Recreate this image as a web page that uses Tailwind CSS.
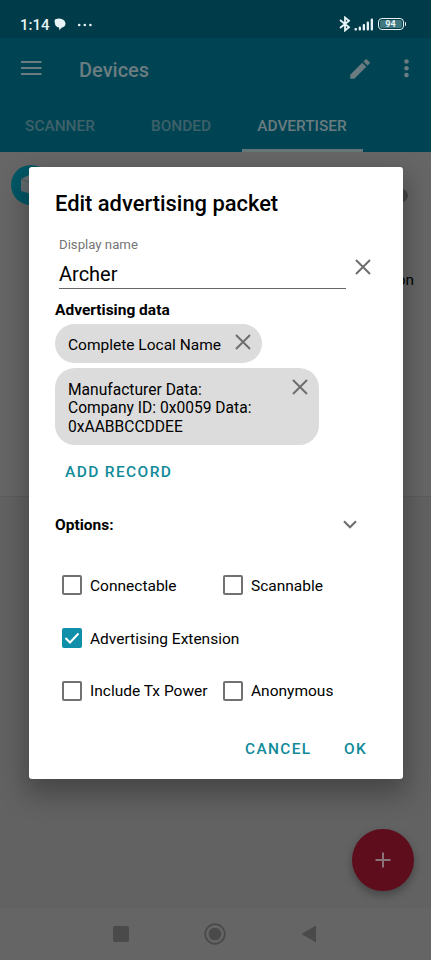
<!DOCTYPE html>
<html lang="en">
<head>
<meta charset="utf-8">
<meta name="viewport" content="width=device-width, initial-scale=1">
<title>Devices</title>
<script src="https://cdn.jsdelivr.net/npm/@tailwindcss/browser@4"></script>
</head>
<body class="relative h-[960px] w-[431px] overflow-hidden bg-[#656565] font-[Roboto,sans-serif] text-black">

<!-- Dimmed screen -->
<div class="flex h-[960px] flex-col">
  <header class="bg-[#004454]">
    <div class="flex h-[38px] items-end justify-between bg-[#003b49] pr-[25px] pl-[20px] text-[#e8f4f6]">
      <div class="flex h-[27px] items-center">
        <span class="pt-[2px] text-[15px] leading-none font-medium">1:14</span>
        <svg class="ml-[4px]" width="13" height="13" viewBox="0 0 13 13" fill="currentColor"><path d="M1 1.500Q6-.8 10 2.200Q12.600 5 10.800 8Q9 9.500 7.500 9.800L5.500 12.300L5 9.600Q1 8.500 1 5.500Q.2 3 1 1.500Z"/></svg>
        <svg class="ml-[10px]" width="16" height="4" viewBox="0 0 16 4" fill="currentColor"><circle cx="2.200" cy="2" r="1.300"/><circle cx="7.800" cy="2" r="1.300"/><circle cx="13.400" cy="2" r="1.300"/></svg>
      </div>
      <div class="flex h-[28px] items-center">
        <svg width="12" height="16" viewBox="0 0 12 16" fill="none" stroke="currentColor" stroke-width="1.800"><path d="M1 4L10 11.300L6 14.500V1.500L10 4.700L1 12"/></svg>
        <svg class="ml-[3px]" width="20" height="13" viewBox="0 0 20 13" fill="currentColor"><rect x="0.500" y="10" width="2.500" height="2.500" rx="1"/><rect x="4.700" y="8.500" width="2.300" height="4" rx="1"/><rect x="8.700" y="6" width="2.300" height="6.500" rx="1"/><rect x="12.700" y="3.500" width="2.300" height="9" rx="1"/><rect x="16.700" y="0.500" width="2.300" height="12" rx="1"/></svg>
        <div class="ml-[4px] flex h-[12px] w-[26px] items-center justify-center rounded-[4px] border border-current p-px"><span class="flex h-full w-full items-center justify-center rounded-[2px] bg-[#3f7880] pt-px text-[9px] leading-none font-bold">94</span></div>
        <div class="ml-px h-[4px] w-[1.500px] rounded-r bg-current"></div>
      </div>
    </div>
    <div class="flex h-[62px] items-center pr-[21px] pl-[21px] text-[#6b7c80]">
      <svg class="-mt-[2px]" width="21" height="14" viewBox="0 0 21 14" fill="currentColor"><path d="M0 0h20.500v2H0zM0 6h20.500v2H0zM0 12h20.500v2H0z"/></svg>
      <h1 class="ml-[37px] flex-1 pt-[2px] text-[20px] leading-none font-medium">Devices</h1>
      <svg class="-mt-px" width="26" height="26" viewBox="0 0 24 24" fill="currentColor"><path d="M3 17.250V21h3.750L17.810 9.940l-3.750-3.750L3 17.250zM20.710 7.040a1 1 0 0 0 0-1.410l-2.340-2.340a1 1 0 0 0-1.410 0l-1.830 1.830 3.750 3.750 1.830-1.830z"/></svg>
      <svg class="-mt-px ml-[30px]" width="7" height="19" viewBox="0 0 7 19" fill="currentColor"><circle cx="3.500" cy="2.500" r="2.300"/><circle cx="3.500" cy="9.300" r="2.300"/><circle cx="3.500" cy="16.100" r="2.300"/></svg>
    </div>
    <nav class="grid h-[52px] grid-cols-[121px_121px_121px] text-center text-[15.400px] font-medium text-[#3e6169]">
      <span class="h-[52px] pr-px leading-[53px]">SCANNER</span>
      <span class="h-[52px] pr-px leading-[53px]">BONDED</span>
      <span class="h-[52px] border-b-[3px] border-[#657779] pr-px leading-[53px] text-[#6b7c80]">ADVERTISER</span>
    </nav>
  </header>
  <main class="relative h-[345px] border-b border-[#5c5c5c] bg-[#666]">
    <div class="absolute top-[13px] left-[11px] flex size-[40px] items-center rounded-full bg-[#005766] pl-[9px]">
      <svg width="22" height="20" viewBox="0 0 22 20"><path d="M1 4L9 0L19 4V15L11 19L1 16Z" fill="#656d70"/><path d="M1 4L11 8L19 4M11 8V19" stroke="#4b595d" fill="none"/></svg>
    </div>
    <div class="absolute top-[37px] left-[395px] size-[13px] rounded-full bg-[#444]"></div>
    <div class="absolute top-[118px] right-[17px] text-[15.400px] leading-[20px]">Advertising Extension</div>
  </main>
  <div class="flex-1 bg-[#626262]"></div>
  <footer class="flex h-[52px] items-center bg-[#656565] pl-[113px] text-[#4a4a4a]">
    <div class="size-[16px] rounded-[2px] bg-current"></div>
    <svg class="ml-[75px]" width="22" height="22" viewBox="0 0 22 22"><circle cx="11" cy="11" r="9.800" fill="none" stroke="currentColor" stroke-width="1.700"/><circle cx="11" cy="11" r="6.300" fill="currentColor"/></svg>
    <svg class="ml-[75px]" width="16" height="18" viewBox="0 0 16 18" fill="currentColor"><path d="M.5 9L15 .5V17.500Z"/></svg>
  </footer>
</div>
<div class="absolute top-[829px] left-[352px] flex size-[62px] items-center justify-center rounded-full bg-[#5e0d1c] shadow-[0_4px_8px_rgba(0,0,0,0.3)]">
  <svg width="16" height="16" viewBox="0 0 16 16" stroke="#8a7378" stroke-width="2"><path d="M8 .5V15.500M.5 8H15.500"/></svg>
</div>

<!-- Dialog -->
<section class="absolute top-[166.500px] left-[28.500px] flex h-[612.500px] w-[374.500px] flex-col rounded-[3px] bg-white pl-[26.500px] shadow-[0_12px_26px_4px_rgba(0,0,0,0.28)]">
  <h2 class="h-[67px] text-[21.900px] leading-[73px] font-medium">Edit advertising packet</h2>
  <div class="flex h-[55px] pl-[4px]">
    <div class="w-[287px] border-b border-[#666]">
      <div class="h-[22px] text-[13.200px] leading-[21px] text-[#757575]">Display name</div>
      <div class="text-[20px] leading-[36px]">Archer</div>
    </div>
    <svg class="mt-[25px] ml-[9px]" width="16" height="16" viewBox="0 0 16 16" stroke="#6e6e6e" stroke-width="2"><path d="M1 1L15 15M15 1L1 15"/></svg>
  </div>
  <h3 class="h-[35px] text-[15.500px] leading-[42px] font-bold">Advertising data</h3>
  <div class="flex h-[39.500px] w-[207px] items-center rounded-full bg-[#dcdcdc] pl-[13px] text-[15.500px]">
    <span class="w-[167px] pt-[4px]">Complete Local Name</span>
    <svg class="-mt-[2px]" width="16" height="16" viewBox="0 0 16 16" stroke="#6e6e6e" stroke-width="2"><path d="M1 1L15 15M15 1L1 15"/></svg>
  </div>
  <div class="mt-[5px] flex h-[76.500px] w-[263.500px] rounded-[20px] bg-[#dcdcdc] pt-[12px] pl-[13px] text-[15.600px] leading-[18.400px]">
    <p class="w-[223.500px] pt-px">Manufacturer Data:<br>Company ID: 0x0059 Data:<br>0xAABBCCDDEE</p>
    <svg class="-mt-px" width="16" height="16" viewBox="0 0 16 16" stroke="#6e6e6e" stroke-width="2"><path d="M1 1L15 15M15 1L1 15"/></svg>
  </div>
  <button class="h-[54px] pt-[2px] pl-[10px] text-left text-[15.500px] font-medium tracking-[1.370px] text-[#118a99]">ADD RECORD</button>
  <div class="flex h-[52px] items-center">
    <h3 class="w-[288px] pt-[2px] text-[15.500px] font-bold">Options:</h3>
    <svg width="14" height="9" viewBox="0 0 14 9" fill="none" stroke="#707070" stroke-width="2.200"><path d="M1 1.200L7 7.200L13 1.200"/></svg>
  </div>
  <div class="mt-[8px] grid grid-cols-[161px_1fr] pl-[7px] text-[15.500px]">
    <label class="flex h-[53px] items-center gap-[8px]"><i class="size-[20px] rounded-[2px] border-2 border-[#717171]"></i><span class="pt-[3px]">Connectable</span></label>
    <label class="flex h-[53px] items-center gap-[8px]"><i class="size-[20px] rounded-[2px] border-2 border-[#717171]"></i><span class="pt-[3px]">Scannable</span></label>
    <label class="col-span-2 flex h-[52.500px] items-center gap-[8px]"><svg width="20" height="20" viewBox="0 0 20 20"><rect width="20" height="20" rx="2" fill="#0f8fa9"/><path d="M3.500 10L8 14.500L16.500 5.500" fill="none" stroke="white" stroke-width="2"/></svg><span class="pt-[3px]">Advertising Extension</span></label>
    <label class="flex h-[53px] items-center gap-[8px]"><i class="size-[20px] rounded-[2px] border-2 border-[#717171]"></i><span class="pt-[3px]">Include Tx Power</span></label>
    <label class="flex h-[53px] items-center gap-[8px]"><i class="size-[20px] rounded-[2px] border-2 border-[#717171]"></i><span class="pt-[3px]">Anonymous</span></label>
  </div>
  <div class="flex flex-1 items-center pt-[4px] pl-[190px] text-[15.400px] font-medium tracking-[1.370px] text-[#118a99]">
    <button class="w-[99px] text-left">CANCEL</button>
    <button>OK</button>
  </div>
</section>
</body>
</html>
